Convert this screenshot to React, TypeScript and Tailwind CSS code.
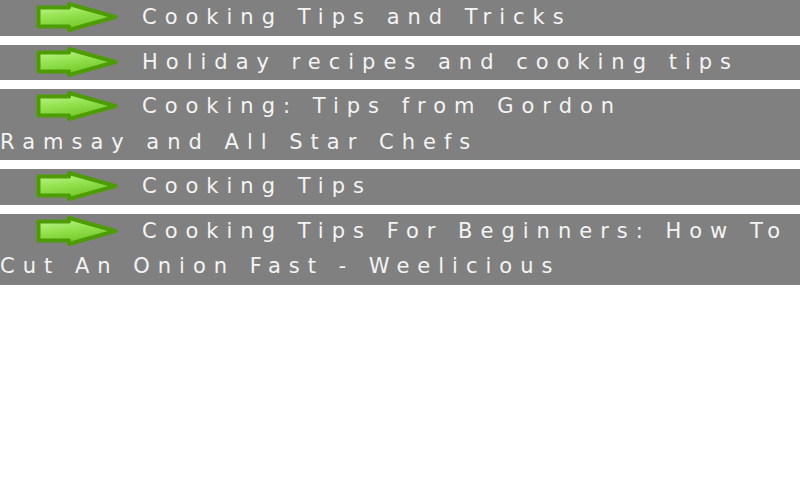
import React from 'react';

const items: React.ReactNode[] = [
  'Cooking Tips and Tricks',
  'Holiday recipes and cooking tips',
  <>
    Cooking: Tips from Gordon
    <br />
    Ramsay and All Star Chefs
  </>,
  'Cooking Tips',
  <>
    Cooking Tips For Beginners: How To
    <br />
    Cut An Onion Fast - Weelicious
  </>,
];

function Arrow() {
  return (
    <svg
      width="82"
      height="30"
      viewBox="0 0 82 30"
      className="inline-block ml-[36px] mr-[24px] align-[-8px]"
    >
      <defs>
        <linearGradient id="arrowFill" x1="0" y1="0" x2="0.4" y2="1">
          <stop offset="0" stopColor="#c8f898" />
          <stop offset="0.5" stopColor="#94e250" />
          <stop offset="1" stopColor="#70c828" />
        </linearGradient>
      </defs>
      <path
        d="M2.5 5.5 H33 V2 L79.5 15 L33 28 V24.5 H2.5 Z"
        fill="url(#arrowFill)"
        stroke="#4e9c05"
        strokeWidth="4"
        strokeLinejoin="round"
      />
    </svg>
  );
}

export default function App() {
  return (
    <div className="w-[800px] h-[480px] bg-white overflow-hidden">
      {items.map((text, i) => (
        <div
          key={i}
          className="bg-[#808080] mb-[9px] text-[#f4f4f4] text-[21px] leading-[35.5px] tracking-[8px] font-['DejaVu_Sans',sans-serif]"
        >
          <Arrow />
          {text}
        </div>
      ))}
    </div>
  );
}
